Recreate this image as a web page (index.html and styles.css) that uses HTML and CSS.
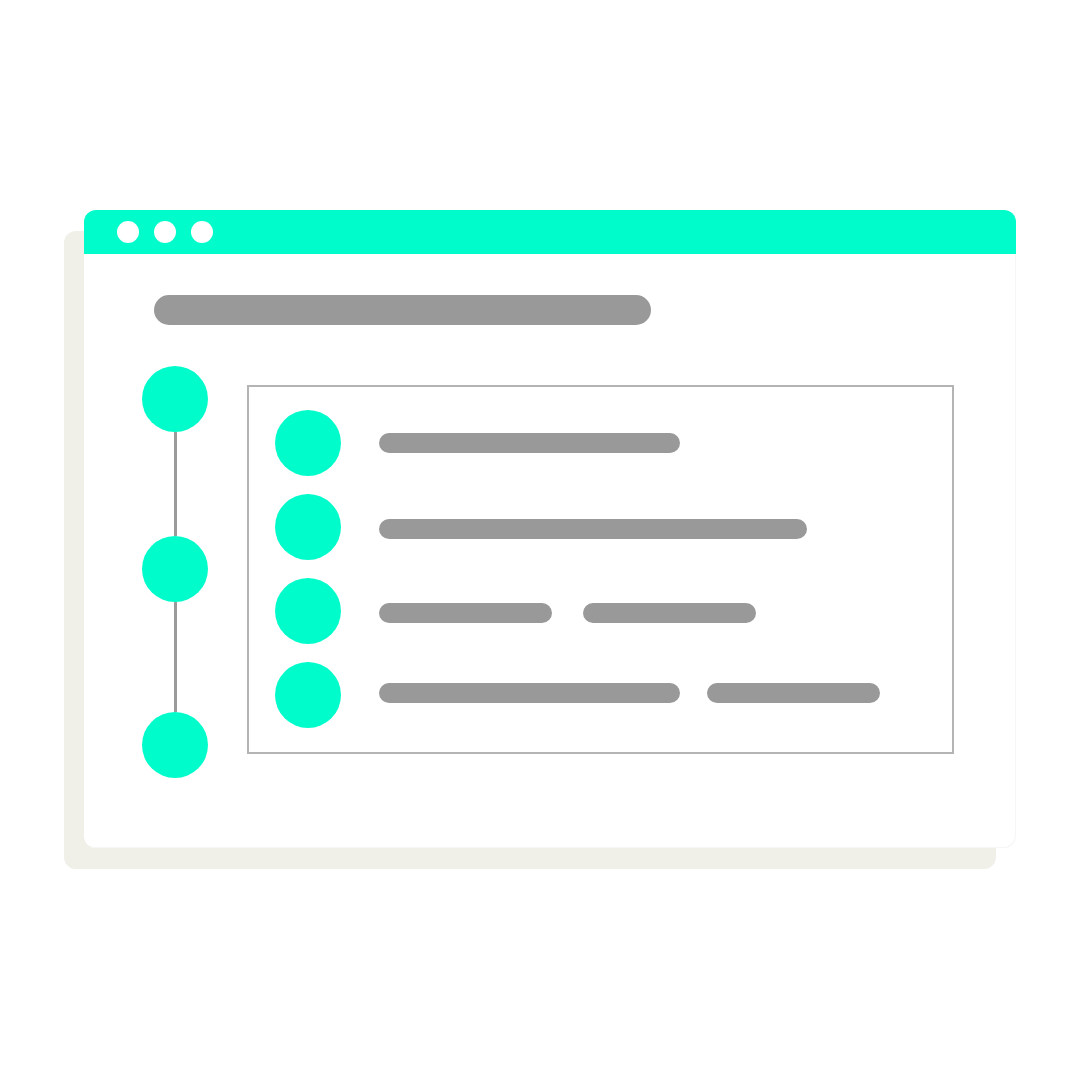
FILE: index.html
```html
<!DOCTYPE html>
<html>
<head>
<meta charset="utf-8">
<link rel="stylesheet" href="styles.css">
</head>
<body>
<div class="stage">
  <div class="window">
    <div class="titlebar">
      <span class="dot"></span><span class="dot"></span><span class="dot"></span>
    </div>
    <div class="content">
      <div class="heading"></div>
      <div class="main">
        <div class="timeline">
          <span class="node"></span>
          <span class="link link-a"></span>
          <span class="node"></span>
          <span class="link link-b"></span>
          <span class="node"></span>
        </div>
        <div class="box">
          <div class="row">
            <span class="avatar"></span>
            <span class="bar w301"></span>
          </div>
          <div class="row down">
            <span class="avatar"></span>
            <span class="bar w428"></span>
          </div>
          <div class="row down">
            <span class="avatar"></span>
            <span class="bar w173"></span>
            <span class="bar w173 gap31"></span>
          </div>
          <div class="row up">
            <span class="avatar"></span>
            <span class="bar w301"></span>
            <span class="bar w173 gap27"></span>
          </div>
        </div>
      </div>
    </div>
  </div>
</div>
</body>
</html>
```

FILE: styles.css
```css
html, body {
  margin: 0;
  padding: 0;
  background: #ffffff;
  font-family: "Liberation Sans", Arial, sans-serif;
}

.stage {
  width: 1080px;
  height: 1080px;
  padding: 210px 0 0 84px;
  box-sizing: border-box;
}

.window {
  width: 932px;
  height: 638px;
  border-radius: 12px;
  background: #ffffff;
  box-shadow: -20px 21px 0 0 #f0efe8;
  display: flex;
  flex-direction: column;
}

.titlebar {
  height: 44px;
  flex: 0 0 44px;
  background: #00fccb;
  border-radius: 12px 12px 0 0;
  display: flex;
  align-items: center;
  gap: 15px;
  padding-left: 33px;
}

.dot {
  width: 22px;
  height: 22px;
  border-radius: 50%;
  background: #ffffff;
}

.content {
  flex: 1;
  padding: 41px 0 0 58px;
  border-radius: 0 0 12px 12px;
  box-shadow: inset -1px -1px 0 #f6f6f6;
}

.heading {
  width: 497px;
  height: 30px;
  border-radius: 15px;
  background: #999999;
  margin-left: 12px;
}

.main {
  display: flex;
  margin-top: 41px;
  gap: 39px;
}

.timeline {
  display: flex;
  flex-direction: column;
  align-items: center;
  width: 66px;
}

.node {
  width: 66px;
  height: 66px;
  border-radius: 50%;
  background: #00fccb;
}

.link {
  width: 3px;
  background: #9a9a9a;
}

.link-a { height: 104px; }
.link-b { height: 110px; }

.box {
  margin-top: 19px;
  width: 707px;
  height: 369px;
  box-sizing: border-box;
  border: 2px solid #b4b4b4;
  padding: 23px 0 0 26px;
  display: flex;
  flex-direction: column;
  gap: 18px;
}

.row {
  display: flex;
  align-items: center;
  height: 66px;
}

.avatar {
  width: 66px;
  height: 66px;
  border-radius: 50%;
  background: #00fccb;
  margin-right: 38px;
  flex: 0 0 66px;
}

.bar {
  height: 20px;
  border-radius: 10px;
  background: #999999;
}

.row.down .bar { margin-top: 4px; }
.row.up .bar { margin-bottom: 4px; }

.w301 { width: 301px; }
.w428 { width: 428px; }
.w173 { width: 173px; }
.gap31 { margin-left: 31px; }
.gap27 { margin-left: 27px; }
```
